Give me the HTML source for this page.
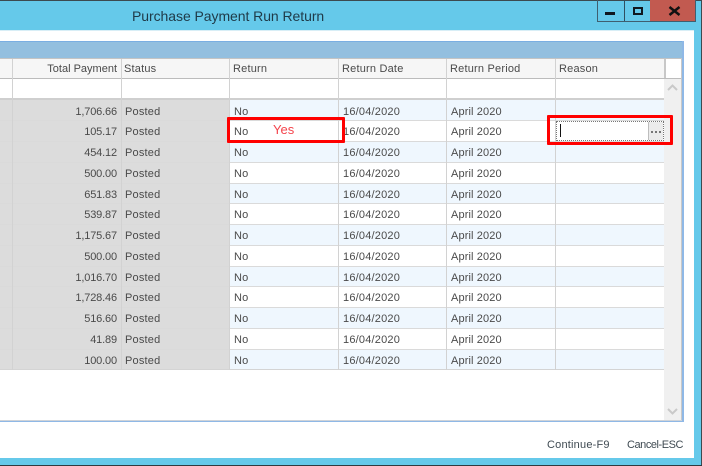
<!DOCTYPE html>
<html><head><meta charset="utf-8"><style>
html,body{margin:0;padding:0;background:#fff}
#p{position:relative;width:702px;height:466px;overflow:hidden;background:#65c9ea;font-family:"Liberation Sans",sans-serif;font-size:11px;color:#4a4a4a}
#p div{position:absolute;box-sizing:border-box}
.t{white-space:nowrap;line-height:14px;letter-spacing:.2px;height:14px}
.r{text-align:right;letter-spacing:-.15px;left:13px;width:104px}
.s{left:125px}.n{left:234px}.d{left:343px}.a{left:451px;letter-spacing:.12px}
</style></head><body><div id="p">
<div style="left:0;top:0;width:702px;height:1px;background:#3c4a50"></div>
<div style="left:701px;top:0;width:1px;height:466px;background:#3c4a50"></div>
<div style="left:0;top:465px;width:702px;height:1px;background:#2f3a40"></div>
<div class="t" style="left:132px;top:7px;font-size:14px;line-height:18px;color:#1f3a48;letter-spacing:-.06px;height:18px">Purchase Payment Run Return</div>

<div style="left:597px;top:0;width:1px;height:22px;background:#3f5f70"></div>
<div style="left:624px;top:0;width:1px;height:21px;background:#2f4f60"></div>
<div style="left:650px;top:0;width:45px;height:21px;background:#c25a50"></div>
<div style="left:597px;top:21px;width:98px;height:1px;background:#3f5f70"></div>
<div style="left:695px;top:0;width:1px;height:22px;background:#3f5f70"></div>
<div style="left:605px;top:12px;width:10px;height:3px;background:#101820"></div>
<div style="left:633px;top:7px;width:10px;height:8px;border:2px solid #101820;border-top-width:2px"></div>
<svg style="position:absolute;left:668px;top:6px" width="13" height="10"><path d="M1.5 1L11.5 9M11.5 1L1.5 9" stroke="#111" stroke-width="2.5"/></svg>

<div style="left:0;top:30px;width:694px;height:428px;background:#fff;border-top:1px solid #d8eef6"></div>
<div style="left:0;top:41px;width:684px;height:18px;background:#93bfdf;border-top:1px solid #7aaee2"></div>
<div style="left:0;top:58px;width:682px;height:1px;background:#c4c4c4"></div>
<div style="left:0;top:59px;width:664px;height:19px;background:#f6f6f6"></div>
<div style="left:0;top:78px;width:681px;height:1px;background:#bcbcbc"></div>
<div style="left:664px;top:79px;width:17px;height:341px;background:#f0f0f0"></div>
<div style="left:681px;top:58px;width:1px;height:362px;background:#c8c8c8"></div>
<div style="left:682px;top:41px;width:2px;height:381px;background:#8fb8e6"></div>
<div style="left:0;top:420px;width:682px;height:1px;background:#cfd3d8"></div>
<div style="left:0;top:421px;width:684px;height:1px;background:#8fb8e6"></div>

<div style="left:0;top:100px;width:229px;height:270px;background:#dcdcdc"></div>
<div style="left:229px;top:100px;width:435px;height:21px;background:#eff7fe"></div>
<div style="left:229px;top:142px;width:435px;height:20px;background:#eff7fe"></div>
<div style="left:229px;top:184px;width:435px;height:19px;background:#eff7fe"></div>
<div style="left:229px;top:225px;width:435px;height:20px;background:#eff7fe"></div>
<div style="left:229px;top:267px;width:435px;height:19px;background:#eff7fe"></div>
<div style="left:229px;top:308px;width:435px;height:20px;background:#eff7fe"></div>
<div style="left:229px;top:350px;width:435px;height:19px;background:#eff7fe"></div>
<div style="left:0;top:98px;width:664px;height:2px;background:#cfcfcf"></div>

<div style="left:0;top:120px;width:664px;height:1px;background:#dadada"></div>
<div style="left:0;top:141px;width:664px;height:1px;background:#dadada"></div>
<div style="left:0;top:162px;width:664px;height:1px;background:#dadada"></div>
<div style="left:0;top:183px;width:664px;height:1px;background:#dadada"></div>
<div style="left:0;top:203px;width:664px;height:1px;background:#dadada"></div>
<div style="left:0;top:224px;width:664px;height:1px;background:#dadada"></div>
<div style="left:0;top:245px;width:664px;height:1px;background:#dadada"></div>
<div style="left:0;top:266px;width:664px;height:1px;background:#dadada"></div>
<div style="left:0;top:286px;width:664px;height:1px;background:#dadada"></div>
<div style="left:0;top:307px;width:664px;height:1px;background:#dadada"></div>
<div style="left:0;top:328px;width:664px;height:1px;background:#dadada"></div>
<div style="left:0;top:349px;width:664px;height:1px;background:#dadada"></div>
<div style="left:0;top:369px;width:664px;height:1px;background:#d4d4d4"></div>

<div style="left:12px;top:59px;width:1px;height:311px;background:#d2d2d2"></div>
<div style="left:121px;top:59px;width:1px;height:311px;background:#d2d2d2"></div>
<div style="left:229px;top:59px;width:1px;height:311px;background:#d2d2d2"></div>
<div style="left:338px;top:59px;width:1px;height:311px;background:#d2d2d2"></div>
<div style="left:446px;top:59px;width:1px;height:311px;background:#d2d2d2"></div>
<div style="left:555px;top:59px;width:1px;height:311px;background:#d2d2d2"></div>
<div style="left:664px;top:59px;width:2px;height:19px;background:#c8c8c8"></div>

<div class="t r" style="top:62px;letter-spacing:0">Total Payment</div>
<div class="t" style="left:124px;top:62px">Status</div>
<div class="t" style="left:233px;top:62px">Return</div>
<div class="t" style="left:342px;top:62px">Return Date</div>
<div class="t" style="left:450px;top:62px">Return Period</div>
<div class="t" style="left:559px;top:62px">Reason</div>

<svg style="position:absolute;left:666px;top:83px" width="13" height="9"><path d="M2 7L6.5 2.5L11 7" fill="none" stroke="#c9c9c9" stroke-width="2"/></svg>
<svg style="position:absolute;left:666px;top:407px" width="13" height="9"><path d="M2 2L6.5 6.5L11 2" fill="none" stroke="#c9c9c9" stroke-width="2"/></svg>

<div class="t r" style="top:105px">1,706.66</div><div class="t s" style="top:105px">Posted</div><div class="t n" style="top:105px">No</div><div class="t d" style="top:105px">16/04/2020</div><div class="t a" style="top:105px">April 2020</div>
<div class="t r" style="top:125px">105.17</div><div class="t s" style="top:125px">Posted</div><div class="t n" style="top:125px">No</div><div class="t d" style="top:125px">16/04/2020</div><div class="t a" style="top:125px">April 2020</div>
<div class="t r" style="top:146px">454.12</div><div class="t s" style="top:146px">Posted</div><div class="t n" style="top:146px">No</div><div class="t d" style="top:146px">16/04/2020</div><div class="t a" style="top:146px">April 2020</div>
<div class="t r" style="top:167px">500.00</div><div class="t s" style="top:167px">Posted</div><div class="t n" style="top:167px">No</div><div class="t d" style="top:167px">16/04/2020</div><div class="t a" style="top:167px">April 2020</div>
<div class="t r" style="top:188px">651.83</div><div class="t s" style="top:188px">Posted</div><div class="t n" style="top:188px">No</div><div class="t d" style="top:188px">16/04/2020</div><div class="t a" style="top:188px">April 2020</div>
<div class="t r" style="top:208px">539.87</div><div class="t s" style="top:208px">Posted</div><div class="t n" style="top:208px">No</div><div class="t d" style="top:208px">16/04/2020</div><div class="t a" style="top:208px">April 2020</div>
<div class="t r" style="top:229px">1,175.67</div><div class="t s" style="top:229px">Posted</div><div class="t n" style="top:229px">No</div><div class="t d" style="top:229px">16/04/2020</div><div class="t a" style="top:229px">April 2020</div>
<div class="t r" style="top:250px">500.00</div><div class="t s" style="top:250px">Posted</div><div class="t n" style="top:250px">No</div><div class="t d" style="top:250px">16/04/2020</div><div class="t a" style="top:250px">April 2020</div>
<div class="t r" style="top:271px">1,016.70</div><div class="t s" style="top:271px">Posted</div><div class="t n" style="top:271px">No</div><div class="t d" style="top:271px">16/04/2020</div><div class="t a" style="top:271px">April 2020</div>
<div class="t r" style="top:291px">1,728.46</div><div class="t s" style="top:291px">Posted</div><div class="t n" style="top:291px">No</div><div class="t d" style="top:291px">16/04/2020</div><div class="t a" style="top:291px">April 2020</div>
<div class="t r" style="top:312px">516.60</div><div class="t s" style="top:312px">Posted</div><div class="t n" style="top:312px">No</div><div class="t d" style="top:312px">16/04/2020</div><div class="t a" style="top:312px">April 2020</div>
<div class="t r" style="top:333px">41.89</div><div class="t s" style="top:333px">Posted</div><div class="t n" style="top:333px">No</div><div class="t d" style="top:333px">16/04/2020</div><div class="t a" style="top:333px">April 2020</div>
<div class="t r" style="top:354px">100.00</div><div class="t s" style="top:354px">Posted</div><div class="t n" style="top:354px">No</div><div class="t d" style="top:354px">16/04/2020</div><div class="t a" style="top:354px">April 2020</div>

<div style="left:556px;top:121px;width:108px;height:20px;background:#fff;border:1px dotted #777"></div>
<div style="left:648px;top:122px;width:15px;height:18px;background:#ececec;border-left:1px solid #bdbdbd"></div>
<div style="left:651px;top:131px;width:2px;height:2px;background:#777"></div>
<div style="left:655px;top:131px;width:2px;height:2px;background:#777"></div>
<div style="left:659px;top:131px;width:2px;height:2px;background:#777"></div>
<div style="left:560px;top:124px;width:1px;height:13px;background:#111"></div>

<div style="left:227px;top:117px;width:118px;height:26px;border:3px solid #f00;border-radius:1px"></div>
<div style="left:547px;top:115px;width:126px;height:30px;border:3px solid #f00;border-radius:1px"></div>
<div class="t" style="left:273px;top:122px;height:16px;font-size:13px;line-height:16px;color:#f4444c;letter-spacing:0">Yes</div>

<div class="t" style="left:547px;top:438px;color:#3f4a52">Continue-F9</div>
<div class="t" style="left:627px;top:438px;color:#3f4a52;letter-spacing:-.45px">Cancel-ESC</div>
</div></body></html>
